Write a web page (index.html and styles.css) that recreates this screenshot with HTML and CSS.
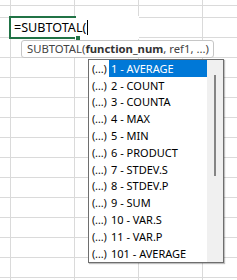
FILE: index.html
```html
<!DOCTYPE html>
<html lang="en">
<head>
    <meta charset="UTF-8">
    <title>Formula autocomplete</title>
    <link rel="stylesheet" href="styles.css">
</head>
<body>
<div class="sheet">
    <div class="active-cell">
        <span class="entry">=SUBTOTAL(</span><span class="caret"></span>
        <span class="fill-handle"></span>
    </div>

    <div class="tip">SUBTOTAL(<b>function_num</b>, ref1, ...)</div>

    <div class="list">
        <ul class="items">
            <li class="item selected"><span class="fx">(…)</span><span class="label">1 - AVERAGE</span></li>
            <li class="item"><span class="fx">(…)</span><span class="label">2 - COUNT</span></li>
            <li class="item"><span class="fx">(…)</span><span class="label">3 - COUNTA</span></li>
            <li class="item"><span class="fx">(…)</span><span class="label">4 - MAX</span></li>
            <li class="item"><span class="fx">(…)</span><span class="label">5 - MIN</span></li>
            <li class="item"><span class="fx">(…)</span><span class="label">6 - PRODUCT</span></li>
            <li class="item"><span class="fx">(…)</span><span class="label">7 - STDEV.S</span></li>
            <li class="item"><span class="fx">(…)</span><span class="label">8 - STDEV.P</span></li>
            <li class="item"><span class="fx">(…)</span><span class="label">9 - SUM</span></li>
            <li class="item"><span class="fx">(…)</span><span class="label">10 - VAR.S</span></li>
            <li class="item"><span class="fx">(…)</span><span class="label">11 - VAR.P</span></li>
            <li class="item"><span class="fx">(…)</span><span class="label">101 - AVERAGE</span></li>
        </ul>
        <div class="scrollbar"><div class="thumb"></div></div>
    </div>
</div>
</body>
</html>
```

FILE: styles.css
```css
html, body {
    margin: 0;
    padding: 0;
    background: #fff;
}

.sheet {
    position: relative;
    width: 237px;
    height: 280px;
    overflow: hidden;
    font-family: "Noto Sans", "Open Sans", sans-serif;
    /* gridlines: columns every 64px from x=10, rows every 20px from y=17 plus one at y=5 */
    background-image:
        repeating-linear-gradient(to right, #dadada 0 1px, transparent 1px 64px),
        linear-gradient(to bottom, transparent 5px, #dadada 5px 6px, transparent 6px),
        repeating-linear-gradient(to bottom, #dadada 0 1px, transparent 1px 20px);
    background-position: 10px 0, 0 0, 0 17px;
    background-repeat: repeat-x, no-repeat, repeat-y;
}

.active-cell {
    position: absolute;
    left: 9px;
    top: 16px;
    width: 128px;
    height: 19px;
    background: #fff;
    border-top: 2px solid #217346;
    border-bottom: 2px solid #217346;
    border-left: 2px solid #217346;
    border-image: linear-gradient(to right, #217346 0 66px, #fff 66px) 2;
    display: flex;
    align-items: center;
}

.entry {
    margin-left: 3px;
    font-size: 12.6px;
    color: #000;
    white-space: nowrap;
}

.caret {
    width: 1px;
    height: 15px;
    margin-left: 1px;
    background: #000;
}

.fill-handle {
    position: absolute;
    left: 64px;
    bottom: -4px;
    width: 4px;
    height: 4px;
    background: #217346;
    border: 1px solid #fff;
}

.tip {
    position: absolute;
    left: 21px;
    top: 40px;
    height: 16px;
    padding: 0 4px 0 5px;
    line-height: 16px;
    border: 1px solid #c6c6c6;
    border-radius: 3px;
    background: #fff;
    color: #444;
    font-size: 11.3px;
    white-space: nowrap;
}

.tip b {
    font-weight: 700;
    color: #333;
}

.list {
    position: absolute;
    left: 88px;
    top: 59px;
    width: 134px;
    height: 202px;
    border: 1px solid #6e6e6e;
    background: #fff;
    display: flex;
    box-shadow: 1px 1px 1px rgba(0, 0, 0, 0.25);
}

.items {
    list-style: none;
    margin: 0;
    padding: 0;
    flex: 1;
}

.item {
    height: 16.8px;
    display: flex;
    align-items: center;
    font-size: 11px;
    color: #000;
    white-space: nowrap;
}

.fx {
    width: 20px;
    padding-left: 3px;
    box-sizing: border-box;
    font-size: 11px;
    letter-spacing: -0.3px;
    color: #111;
}

.label {
    flex: 1;
    height: 100%;
    padding-left: 2px;
    display: flex;
    align-items: center;
}

.selected .label {
    background: #0078d7;
    color: #fff;
}

.scrollbar {
    width: 16px;
    background: #f0f0f0;
    position: relative;
}

.thumb {
    position: absolute;
    left: 7px;
    top: 15px;
    width: 2px;
    height: 101px;
    background: #858585;
}
```
